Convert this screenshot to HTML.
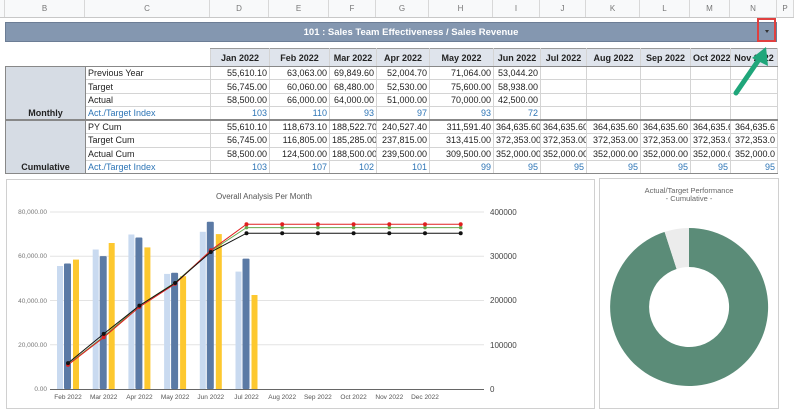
<!DOCTYPE html>
<html><head><meta charset="utf-8">
<style>
*{margin:0;padding:0;box-sizing:border-box}
body{width:794px;height:407px;overflow:hidden;background:#fff;font-family:"Liberation Sans",Arial,sans-serif;position:relative}
.hdr{position:absolute;top:0;left:0;height:18px;display:flex;border-bottom:1px solid #c8c8c8;background:#f8f9fa}
.hdr div{border-right:1px solid #d8d8d8;font-size:8px;color:#777;text-align:center;line-height:18px}
.title{position:absolute;left:5px;top:22px;width:772px;height:20px;background:#8497b0;border:1px solid #6c7d95;color:#fff;font-weight:bold;font-size:9.5px;line-height:19px;text-align:center;padding-left:40px}
.dd{position:absolute;left:757px;top:18px;width:19px;height:24px;border:2px solid #e0403f}
.dd:after{content:"";position:absolute;left:6px;top:10px;border-left:2.5px solid transparent;border-right:2.5px solid transparent;border-top:3px solid #333}
table{position:absolute;left:5px;top:48px;width:772px;border-collapse:collapse;table-layout:fixed;font-size:9px;color:#222}
td{height:13.4px;padding:0 2px;border:1px solid #d4d4d4;white-space:nowrap;overflow:hidden;text-align:right;line-height:12px}
tr.h td{height:18px;background:#dfe4ec;font-weight:bold;text-align:center;border-top:1px solid #999;border-bottom:1px solid #888}
tr.h td.e{background:#fff;border:none;border-bottom:1px solid #888}
td.lab{text-align:left}
td.grp{background:#d6dce4;text-align:center;vertical-align:bottom;font-weight:bold;border:1px solid #888}
.blue td{color:#2e75b6}
.blue td.grp{color:#222}
tr.sep td{border-top:2px solid #888}
tr.last td{border-bottom:1px solid #888}
.p1{position:absolute;left:6px;top:179px;width:589px;height:230px;border:1px solid #d0d0d0}
.p2{position:absolute;left:599px;top:178px;width:180px;height:231px;border:1px solid #d0d0d0}
</style></head><body>
<div class="hdr">
<div style="width:5px"></div><div style="width:80px">B</div><div style="width:125px">C</div><div style="width:59px">D</div><div style="width:60px">E</div><div style="width:47px">F</div><div style="width:53px">G</div><div style="width:64px">H</div><div style="width:47px">I</div><div style="width:46px">J</div><div style="width:54px">K</div><div style="width:50px">L</div><div style="width:40px">M</div><div style="width:47px">N</div><div style="width:17px">P</div>
</div>
<div class="title">101 : Sales Team Effectiveness / Sales Revenue</div>
<div class="dd"></div>
<table>
<colgroup><col style="width:80px"><col style="width:125px"><col style="width:59px"><col style="width:60px"><col style="width:47px"><col style="width:53px"><col style="width:64px"><col style="width:47px"><col style="width:46px"><col style="width:54px"><col style="width:50px"><col style="width:40px"><col style="width:47px"></colgroup>
<tr class="h"><td class="e"></td><td class="e"></td><td>Jan 2022</td><td>Feb 2022</td><td>Mar 2022</td><td>Apr 2022</td><td>May 2022</td><td>Jun 2022</td><td>Jul 2022</td><td>Aug 2022</td><td>Sep 2022</td><td>Oct 2022</td><td>Nov 2022</td></tr>
<tr><td class="grp" rowspan="4">Monthly</td><td class="lab">Previous Year</td><td>55,610.10</td><td>63,063.00</td><td>69,849.60</td><td>52,004.70</td><td>71,064.00</td><td>53,044.20</td><td></td><td></td><td></td><td></td><td></td></tr>
<tr><td class="lab">Target</td><td>56,745.00</td><td>60,060.00</td><td>68,480.00</td><td>52,530.00</td><td>75,600.00</td><td>58,938.00</td><td></td><td></td><td></td><td></td><td></td></tr>
<tr><td class="lab">Actual</td><td>58,500.00</td><td>66,000.00</td><td>64,000.00</td><td>51,000.00</td><td>70,000.00</td><td>42,500.00</td><td></td><td></td><td></td><td></td><td></td></tr>
<tr class="blue"><td class="lab">Act./Target Index</td><td>103</td><td>110</td><td>93</td><td>97</td><td>93</td><td>72</td><td></td><td></td><td></td><td></td><td></td></tr>
<tr class="sep"><td class="grp" rowspan="4">Cumulative</td><td class="lab">PY Cum</td><td>55,610.10</td><td>118,673.10</td><td>188,522.70</td><td>240,527.40</td><td>311,591.40</td><td>364,635.60</td><td>364,635.60</td><td>364,635.60</td><td>364,635.60</td><td>364,635.6</td><td>364,635.6</td></tr>
<tr><td class="lab">Target Cum</td><td>56,745.00</td><td>116,805.00</td><td>185,285.00</td><td>237,815.00</td><td>313,415.00</td><td>372,353.00</td><td>372,353.00</td><td>372,353.00</td><td>372,353.00</td><td>372,353.0</td><td>372,353.0</td></tr>
<tr><td class="lab">Actual Cum</td><td>58,500.00</td><td>124,500.00</td><td>188,500.00</td><td>239,500.00</td><td>309,500.00</td><td>352,000.00</td><td>352,000.00</td><td>352,000.00</td><td>352,000.00</td><td>352,000.0</td><td>352,000.0</td></tr>
<tr class="blue last"><td class="lab">Act./Target Index</td><td>103</td><td>107</td><td>102</td><td>101</td><td>99</td><td>95</td><td>95</td><td>95</td><td>95</td><td>95</td><td>95</td></tr>
</table>
<svg style="position:absolute;left:0;top:0" width="794" height="407">
<path d="M736 93 L760 58" stroke="#1fa67a" stroke-width="5" stroke-linecap="round"/>
<polygon points="766,47 768,66 752,58" fill="#1fa67a"/>
</svg>
<div class="p1"></div><div class="p2"></div>
<svg style="position:absolute;left:0;top:0" width="794" height="407" font-family="Liberation Sans,Arial,sans-serif">
<text x="264" y="199" font-size="8" fill="#555" text-anchor="middle">Overall Analysis Per Month</text>
<g stroke="#e3e3e3" stroke-width="1">
<line x1="50" y1="212" x2="484" y2="212"/><line x1="50" y1="256.25" x2="484" y2="256.25"/><line x1="50" y1="300.5" x2="484" y2="300.5"/><line x1="50" y1="344.75" x2="484" y2="344.75"/>
</g>
<line x1="50" y1="389.5" x2="484" y2="389.5" stroke="#666" stroke-width="1"/>
<g font-size="6.5" fill="#777" text-anchor="end">
<text x="47" y="214">80,000.00</text><text x="47" y="258">60,000.00</text><text x="47" y="303">40,000.00</text><text x="47" y="347">20,000.00</text><text x="47" y="391">0.00</text>
</g>
<g font-size="8" fill="#444">
<text x="490" y="215">400000</text><text x="490" y="259">300000</text><text x="490" y="303">200000</text><text x="490" y="348">100000</text><text x="490" y="392">0</text>
</g>
<g font-size="6.5" fill="#555" text-anchor="middle">
<text x="68" y="399">Feb 2022</text><text x="103.7" y="399">Mar 2022</text><text x="139.4" y="399">Apr 2022</text><text x="175.1" y="399">May 2022</text><text x="210.8" y="399">Jun 2022</text><text x="246.5" y="399">Jul 2022</text><text x="282.2" y="399">Aug 2022</text><text x="317.9" y="399">Sep 2022</text><text x="353.6" y="399">Oct 2022</text><text x="389.3" y="399">Nov 2022</text><text x="425" y="399">Dec 2022</text>
</g>
<g fill="#c9daf0">
<rect x="57" y="266" width="6" height="123"/><rect x="92.7" y="249.5" width="6" height="139.5"/><rect x="128.4" y="234.5" width="6" height="154.5"/><rect x="164.1" y="273.9" width="6" height="115.1"/><rect x="199.8" y="231.8" width="6" height="157.2"/><rect x="235.5" y="271.6" width="6" height="117.4"/>
</g>
<g fill="#5b7aa5">
<rect x="64" y="263.5" width="7" height="125.5" rx="1"/><rect x="99.7" y="256.1" width="7" height="132.9" rx="1"/><rect x="135.4" y="237.5" width="7" height="151.5" rx="1"/><rect x="171.1" y="272.8" width="7" height="116.2" rx="1"/><rect x="206.8" y="221.7" width="7" height="167.3" rx="1"/><rect x="242.5" y="258.6" width="7" height="130.4" rx="1"/>
</g>
<g fill="#fdc82f">
<rect x="73" y="259.6" width="6" height="129.4"/><rect x="108.7" y="243" width="6" height="146"/><rect x="144.4" y="247.4" width="6" height="141.6"/><rect x="180.1" y="276.2" width="6" height="112.8"/><rect x="215.8" y="234.1" width="6" height="154.9"/><rect x="251.5" y="295" width="6" height="94"/>
</g>
<polyline fill="none" stroke="#6aa84f" stroke-width="1" points="68,364.4 103.7,336.5 139.4,305.6 175.1,282.6 210.8,251.1 246.5,227.6 282.2,227.6 317.9,227.6 353.6,227.6 389.3,227.6 425,227.6 460.7,227.6"/>
<polyline fill="none" stroke="#e02020" stroke-width="1" points="68,364.9 103.7,337.3 139.4,307 175.1,283.8 210.8,250.3 246.5,224.2 282.2,224.2 317.9,224.2 353.6,224.2 389.3,224.2 425,224.2 460.7,224.2"/>
<polyline fill="none" stroke="#111" stroke-width="1" points="68,363.1 103.7,333.9 139.4,305.6 175.1,283 210.8,252 246.5,233.2 282.2,233.2 317.9,233.2 353.6,233.2 389.3,233.2 425,233.2 460.7,233.2"/>
<g fill="#6aa84f"><circle cx="282.2" cy="227.6" r="1.8"/><circle cx="317.9" cy="227.6" r="1.8"/><circle cx="353.6" cy="227.6" r="1.8"/><circle cx="389.3" cy="227.6" r="1.8"/><circle cx="425" cy="227.6" r="1.8"/><circle cx="460.7" cy="227.6" r="1.8"/><circle cx="246.5" cy="227.6" r="1.8"/></g>
<g fill="#e02020"><circle cx="68" cy="364.9" r="2"/><circle cx="103.7" cy="337.3" r="2"/><circle cx="139.4" cy="307" r="2"/><circle cx="175.1" cy="283.8" r="2"/><circle cx="210.8" cy="250.3" r="2"/><circle cx="246.5" cy="224.2" r="2"/><circle cx="282.2" cy="224.2" r="2"/><circle cx="317.9" cy="224.2" r="2"/><circle cx="353.6" cy="224.2" r="2"/><circle cx="389.3" cy="224.2" r="2"/><circle cx="425" cy="224.2" r="2"/><circle cx="460.7" cy="224.2" r="2"/></g>
<g fill="#111"><circle cx="68" cy="363.1" r="2"/><circle cx="103.7" cy="333.9" r="2"/><circle cx="139.4" cy="305.6" r="2"/><circle cx="175.1" cy="283" r="2"/><circle cx="210.8" cy="252" r="2"/><circle cx="246.5" cy="233.2" r="2"/><circle cx="282.2" cy="233.2" r="2"/><circle cx="317.9" cy="233.2" r="2"/><circle cx="353.6" cy="233.2" r="2"/><circle cx="389.3" cy="233.2" r="2"/><circle cx="425" cy="233.2" r="2"/><circle cx="460.7" cy="233.2" r="2"/></g>
<text x="689" y="193" font-size="7.5" fill="#666" text-anchor="middle">Actual/Target Performance</text>
<text x="689" y="201" font-size="7.5" fill="#666" text-anchor="middle">- Cumulative -</text>
<path d="M689 228 A79 79 0 1 1 664.6 231.9 L676.6 269 A40 40 0 1 0 689 267 Z" fill="#5b8c78"/>
<path d="M664.6 231.9 A79 79 0 0 1 689 228 L689 267 A40 40 0 0 0 676.6 269 Z" fill="#ececec"/>
</svg>
</body></html>
